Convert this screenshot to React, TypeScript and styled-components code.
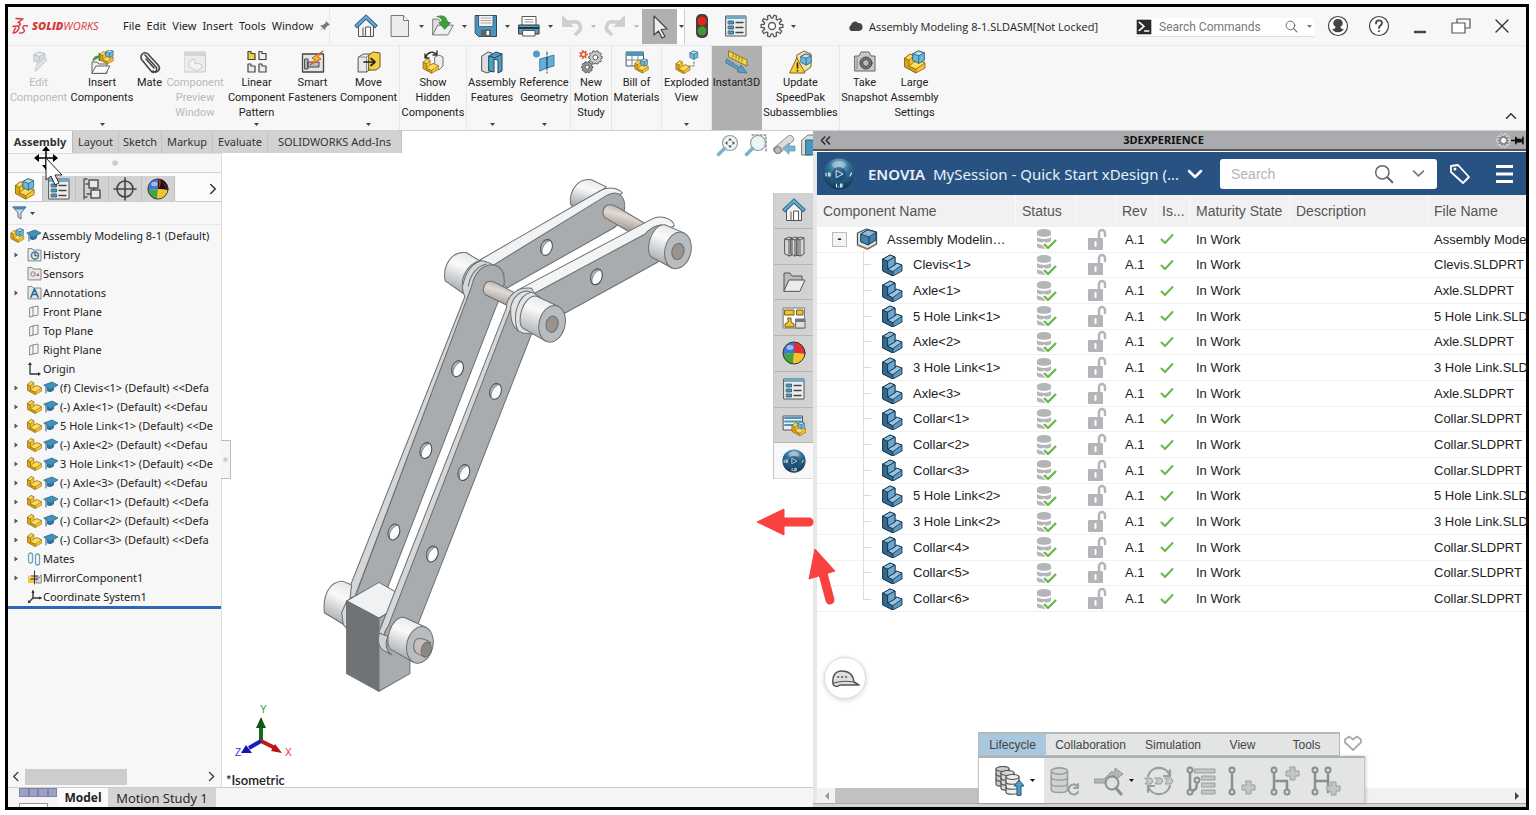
import React from "react";
import styled, { createGlobalStyle, css } from "styled-components";

const UI = `"Noto Sans", "Open Sans", sans-serif`;
const ARIAL = `"Liberation Sans", Arial, sans-serif`;

const Global = createGlobalStyle`
  *, *::before, *::after { box-sizing: border-box; }
  body { margin: 0; background: #fff; font-family: ${UI}; font-size: 12px; color: #222; }
  button { font: inherit; color: inherit; background: none; border: 0; padding: 0; margin: 0; cursor: default; }
  input { font: inherit; border: 0; outline: 0; background: none; padding: 0; }
  svg { display: block; flex: none; }
  a { color: inherit; text-decoration: none; }
`;

/* ---------- shell ---------- */
const Page = styled.div`
  display: flex;
  min-height: 100vh;
  padding: 4px 7px 5px 5px;
`;
const Frame = styled.div`
  position: relative;
  flex: 1;
  min-width: 0;
  display: flex;
  flex-direction: column;
  border: 3px solid #000;
  background: #f7f7f7;
`;

/* ---------- title bar ---------- */
const TitleBar = styled.header`
  display: flex;
  align-items: stretch;
  height: 39px;
  border-bottom: 1px solid #e9e9e9;
`;
const Brand = styled.div`
  display: flex;
  align-items: center;
  width: 322px;
  padding-left: 4px;
  border-right: 1px solid #e9e9e9;
`;
const BrandName = styled.span`
  flex: none;
  width: 91px;
  margin-left: 4px;
  font: italic 400 11px/14px "Open Sans", sans-serif;
  color: #d9363c;
  b { font-weight: 800; }
`;
const MenuBar = styled.nav`
  display: flex;
  align-items: center;
  gap: 6px;
`;
const MenuLink = styled.a`
  font-size: 11px;
  line-height: 16px;
  white-space: nowrap;
`;
const QuickTools = styled.div`
  display: flex;
  align-items: stretch;
  padding-left: 20px;
`;
const QuickGroup = styled.div<{ $dim?: boolean; $w?: number }>`
  display: flex;
  align-items: center;
  width: ${(p) => p.$w ?? 43}px;
  padding-left: 4px;
  gap: 5px;
  opacity: ${(p) => (p.$dim ? 0.35 : 1)};
`;
const SelectButton = styled.button`
  display: grid;
  place-items: center;
  width: 35px;
  margin: 2px 0 1px;
  background: #b0b0b0;
`;
const SelectMore = styled.button`
  display: grid;
  place-items: center;
  width: 8px;
  margin: 2px 0 1px;
  background: #fff;
  border-right: 1px solid #ccc;
`;
const DocumentName = styled.div`
  flex: 1;
  display: flex;
  align-items: center;
  justify-content: flex-end;
  gap: 6px;
  white-space: nowrap;
  font-family: "Open Sans", sans-serif;
  font-size: 11px;
`;
const CommandSearch = styled.label`
  display: flex;
  align-items: center;
  align-self: center;
  gap: 7px;
  width: 178px;
  height: 19px;
  margin: 2px 12px 0 38px;
  background: #fff;
  border-bottom: 1px solid #ddd;
  font-family: Roboto, sans-serif;
  font-size: 12px;
  color: #777;
  input { flex: 1; min-width: 0; &::placeholder { color: #777; opacity: 1; } }
`;
const WindowButtons = styled.div`
  display: flex;
  align-items: center;
  gap: 17px;
  padding-right: 12px;
`;

/* ---------- ribbon ---------- */
const Ribbon = styled.div`
  display: flex;
  align-items: stretch;
  height: 85px;
  border-bottom: 1px solid #d0d0d0;
`;
const RibbonButton = styled.button<{ $w: number; $dim?: boolean; $on?: boolean; $sep?: boolean }>`
  display: flex;
  flex-direction: column;
  align-items: center;
  width: ${(p) => p.$w}px;
  padding: 4px 0 3px;
  border-right: 1px solid ${(p) => (p.$sep ? "#e6e6e6" : "transparent")};
  font-family: Roboto, sans-serif;
  font-size: 11px;
  line-height: 15px;
  text-align: center;
  white-space: pre;
  ${(p) => p.$on && css`background: #b0b0b0;`}
  ${(p) => p.$dim && css`color: #b9b9b9; svg { opacity: 0.35; }`}
`;
const RibbonText = styled.span`
  flex: 1;
  margin-top: 1px;
`;
const Collapse = styled.button`
  margin-left: auto;
  align-self: flex-end;
  padding: 0 9px 8px;
`;

/* ---------- body ---------- */
const Body = styled.div`
  flex: 1;
  display: flex;
  min-height: 0;
`;
const Workspace = styled.section`
  flex: 1;
  min-width: 0;
  display: flex;
  flex-direction: column;
  background: #fff;
`;
const TabRow = styled.div`
  display: flex;
  height: 22px;
`;
const CommandTab = styled.button<{ $on?: boolean; $w: number }>`
  width: ${(p) => p.$w}px;
  background: ${(p) => (p.$on ? "#f9f9f9" : "#d2d2d2")};
  border-right: 1px solid ${(p) => (p.$on ? "#bbb" : "#c2c2c2")};
  font-size: 11px;
  line-height: 20px;
  white-space: nowrap;
  color: #333;
  font-weight: ${(p) => (p.$on ? 700 : 400)};
`;
const ViewTools = styled.div`
  flex: 1;
  display: flex;
  justify-content: flex-end;
  align-items: flex-start;
  gap: 4px;
  padding-top: 2px;
  overflow: visible;
`;
const Split = styled.div`
  flex: 1;
  display: flex;
  min-height: 0;
`;
const Manager = styled.aside`
  position: relative;
  display: flex;
  flex-direction: column;
  width: 214px;
  background: #f7f7f7;
  border-right: 1px solid #dcdcdc;
`;
const Grip = styled.div`
  display: grid;
  place-items: center;
  height: 20px;
  border-top: 1px solid #ddd;
  border-bottom: 1px solid #d4d4d4;
`;
const ManagerTabs = styled.div`
  display: flex;
  height: 29px;
  padding-top: 3px;
  border-bottom: 1px solid #ccc;
  background: #fbfbfb;
`;
const ManagerTab = styled.button<{ $on?: boolean }>`
  display: grid;
  place-items: center;
  width: ${(p) => (p.$on ? 35 : 33)}px;
  background: ${(p) => (p.$on ? "#fbfbfb" : "#d2d2d2")};
  border-right: 1px solid #c0c0c0;
`;
const MoreTabs = styled.button`
  margin-left: auto;
  padding-right: 2px;
`;
const FilterRow = styled.div`
  display: flex;
  align-items: center;
  height: 23px;
  padding-left: 4px;
  border-bottom: 1px solid #e8e8e8;
`;
const Tree = styled.ul`
  list-style: none;
  margin: 0;
  padding: 1px 0 0;
  border-bottom: 3px solid #2f66b5;
`;
const TreeItem = styled.li<{ $root?: boolean }>`
  display: flex;
  align-items: center;
  height: 19px;
  padding-left: ${(p) => (p.$root ? 2 : 5)}px;
  white-space: nowrap;
  font-size: 11px;
  line-height: 18px;
`;
const Arrow = styled.span`
  flex: none;
  width: 14px;
`;
const Pad = styled.span`
  width: 1px;
  flex: none;
`;
const Nub = styled.button`
  position: absolute;
  left: 213px;
  top: 287px;
  width: 10px;
  height: 39px;
  display: grid;
  place-items: center;
  background: #f5f5f5;
  border: 1px solid #bbb;
  border-left: 0;
`;
const TreeScroll = styled.div`
  display: flex;
  align-items: center;
  justify-content: space-between;
  height: 19px;
  margin-top: auto;
  padding: 0 4px 2px 3px;
`;
const TreeThumb = styled.div`
  width: 102px;
  height: 16px;
  margin: 0 auto 0 3px;
  background: #cdcdcd;
`;
const Viewport = styled.main`
  flex: 1;
  display: flex;
  min-width: 0;
  position: relative;
`;
const ModelCanvas = styled.svg`
  flex: 1;
  min-width: 0;
  height: 634px;
`;
const ViewName = styled.span`
  position: absolute;
  left: 4px;
  bottom: -2px;
  font: 600 13px/18px Lato, sans-serif;
  color: #222;
`;
const TaskTabs = styled.div`
  display: flex;
  flex-direction: column;
  width: 40px;
  height: 286px;
  margin-top: 40px;
  border-left: 1px solid #c6c6c6;
`;
const TaskTab = styled.button<{ $on?: boolean }>`
  flex: 1;
  display: grid;
  place-items: center;
  background: ${(p) => (p.$on ? "#f8f8f8" : "#d2d2d2")};
  border-bottom: 1px solid ${(p) => (p.$on ? "#ddd" : "#b5b5b5")};
`;
const BottomBar = styled.div`
  display: flex;
  height: 20px;
  background: #f5f5f5;
  border-top: 1px solid #ccc;
`;
const SheetNav = styled.div`
  width: 50px;
  padding: 0 0 0 11px;
  display: flex;
  flex-direction: column;
  gap: 6px;
`;
const NavCells = styled.div`
  display: grid;
  grid-template-columns: repeat(4, 1fr);
  width: 38px;
  height: 9px;
  background: #9da1c4;
  span { border: 1px solid #7e83ab; }
`;
const NavBox = styled.div`
  width: 29px;
  height: 4px;
  border: 1px solid #999;
  border-bottom: 0;
  background: #fff;
`;
const SheetTab = styled.button<{ $on?: boolean; $w: number }>`
  width: ${(p) => p.$w}px;
  background: ${(p) => (p.$on ? "#fafafa" : "#d4d4d4")};
  font-family: "Open Sans", sans-serif;
  font-size: ${(p) => (p.$on ? 12 : 13)}px;
  line-height: 16px;
  font-weight: ${(p) => (p.$on ? 700 : 400)};
  white-space: nowrap;
`;

/* ---------- 3DEXPERIENCE pane ---------- */
const Pane = styled.section`
  display: flex;
  flex-direction: column;
  width: 713px;
  background: #fff;
  position: relative;
`;
const PaneHead = styled.div`
  display: flex;
  align-items: center;
  justify-content: space-between;
  height: 20px;
  padding: 0 2px 0 7px;
  background: #a9abae;
  border-bottom: 2px solid #555;
  h2 { margin: 0; font: 700 11px/18px ${UI}; color: #111; }
`;
const PaneTools = styled.div`
  display: flex;
  align-items: center;
`;
const PaneBody = styled.div`
  flex: 1;
  display: flex;
  flex-direction: column;
  margin-top: 1px;
  border-left: 4px solid #e7e7e9;
`;
const SessionBar = styled.div`
  display: flex;
  align-items: center;
  height: 43px;
  padding: 0 12px 0 6px;
  background: #275282;
  color: #e9f0f8;
`;
const SessionTitle = styled.h1`
  flex: 1;
  display: flex;
  align-items: center;
  gap: 8px;
  margin: 0 0 0 13px;
  font: 400 15px/20px "Noto Sans", sans-serif;
  white-space: nowrap;
  b { font-weight: 600; }
`;
const SessionSearch = styled.label`
  display: flex;
  align-items: center;
  gap: 18px;
  width: 217px;
  height: 30px;
  margin-right: 11px;
  padding: 0 12px 0 11px;
  background: #fff;
  border-radius: 3px;
  font-family: ${ARIAL};
  font-size: 14px;
  input { flex: 1; min-width: 0; &::placeholder { color: #b4b4b4; opacity: 1; } }
`;
const Grid = styled.table`
  width: 100%;
  height: 417px;
  table-layout: fixed;
  border-collapse: separate;
  border-spacing: 0;
  font-family: ${ARIAL};
  font-size: 13px;
  color: #222;
`;
const Th = styled.th<{ $w?: number }>`
  width: ${(p) => (p.$w ? `${p.$w}px` : "auto")};
  height: 32px;
  padding: 0 0 0 6px;
  text-align: left;
  font-size: 14px;
  font-weight: 400;
  color: #555;
  background: #f1f1f1;
  border-right: 1px solid #fafafa;
  white-space: nowrap;
`;
const Td = styled.td<{ $pad?: number }>`
  padding: 0 0 0 ${(p) => p.$pad ?? 6}px;
  border-bottom: 1px solid #f1f1f1;
  white-space: nowrap;
`;
const NameCell = styled.div<{ $child?: boolean }>`
  display: flex;
  align-items: center;
  gap: ${(p) => (p.$child ? 10 : 9)}px;
  padding-left: ${(p) => (p.$child ? 46 : 15)}px;
  height: 24px;
`;
const Guide = styled.span<{ $last?: boolean }>`
  align-self: stretch;
  width: 8px;
  margin: ${(p) => (p.$last ? "-2px 0 11px" : "-2px 0")};
  border-left: 1px solid #dcdcdc;
  border-bottom: ${(p) => (p.$last ? "1px solid #dcdcdc" : "0")};
  background: ${(p) => (p.$last ? "none" : "linear-gradient(#dcdcdc, #dcdcdc) 0 50% / 8px 1px no-repeat")};
`;
const Toggle = styled.button`
  width: 15px;
  height: 15px;
  border: 1px solid #bbb;
  background: #f4f4f4;
  font: 700 12px/11px ${ARIAL};
`;
const PaneScroll = styled.div`
  display: flex;
  align-items: center;
  height: 15px;
  margin-top: auto;
  padding: 0 5px 0 6px;
  background: #f1f1f1;
  justify-content: space-between;
`;
const PaneThumb = styled.div`
  width: 340px;
  height: 15px;
  margin: 0 auto 0 4px;
  background: #c1c1c1;
`;
const PaneFoot = styled.div`
  height: 4px;
  background: #d5d5d5;
  border-top: 1px solid #aaa;
`;
const Helmet = styled.button`
  position: absolute;
  left: 11px;
  bottom: 108px;
  width: 42px;
  height: 42px;
  display: grid;
  place-items: center;
  border-radius: 50%;
  border: 1px solid #ddd;
  background: #fff;
  box-shadow: 0 1px 5px rgba(0, 0, 0, 0.18);
`;
const Actions = styled.div`
  position: absolute;
  left: 165px;
  bottom: 4px;
  width: 387px;
`;
const ActionTabsRow = styled.div`
  display: flex;
  align-items: center;
  gap: 3px;
`;
const ActionTabs = styled.div`
  display: flex;
  height: 24px;
  width: 362px;
  border: 1px solid #b5b8b8;
  border-top-width: 2px;
  background: #e2e5e4;
`;
const ActionTab = styled.button<{ $w: number; $on?: boolean }>`
  width: ${(p) => p.$w}px;
  font: 12px/20px ${ARIAL};
  color: #444;
  background: ${(p) => (p.$on ? "#a7c8de" : "none")};
`;
const ActionBar = styled.div`
  display: flex;
  height: 47px;
  border: 1px solid #c3c6c6;
  border-top: 2px solid #aeb1b1;
  border-bottom: 0;
  background: #e2e5e4;
  box-shadow: 1px 0 3px rgba(0, 0, 0, 0.2);
`;
const Action = styled.button<{ $w: number; $on?: boolean; $more?: boolean }>`
  display: flex;
  align-items: center;
  justify-content: center;
  gap: 3px;
  width: ${(p) => p.$w}px;
  padding-left: ${(p) => (p.$more ? 8 : 0)}px;
  background: ${(p) => (p.$on ? "#fff" : "none")};
`;
const Overlay = styled.svg<{ $x: number; $y: number }>`
  position: absolute;
  left: ${(p) => p.$x}px;
  top: ${(p) => p.$y}px;
  pointer-events: none;
`;

/* ---------- icons ---------- */
type IconProps = { s?: number; children?: React.ReactNode; vb?: string; w?: number };
const I = ({ s = 24, w, vb = "0 0 24 24", children }: IconProps) => (
  <svg width={w ?? s} height={s} viewBox={vb} fill="none" strokeLinejoin="round" strokeLinecap="round" aria-hidden="true">
    {children}
  </svg>
);
const Caret = ({ color = "#444" }: { color?: string }) => (
  <svg width="9" height="5" viewBox="0 0 9 5" aria-hidden="true"><path d="M2 1h5L4.500 4z" fill={color} /></svg>
);
const Block = ({ x = 0, y = 0, k = 1 }: { x?: number; y?: number; k?: number }) => (
  <g transform={`translate(${x} ${y}) scale(${k})`} stroke="#8a6210" strokeWidth=".8">
    <path d="M2 8l5-4 4 2v6l4-2 7 3v5l-9 5-11-6z" fill="#f5c52c" />
    <path d="M2 8l4 2v6l7 3.500V23L2 17z" fill="#dba41a" />
    <path d="M2 8l5-4 4 2-5 4zM6 16l5-4 4-2 7 3-9 6z" fill="#fbdc5e" />
  </g>
);
const Cube = ({ x = 0, y = 0, k = 1, c = "#6db7dd" }: { x?: number; y?: number; k?: number; c?: string }) => (
  <g transform={`translate(${x} ${y}) scale(${k})`} stroke="#1d4f6e" strokeWidth=".8">
    <path d="M0 3l6-3 6 2v8l-6 3-6-3z" fill={c} />
    <path d="M0 3l6 2 6-3-6-2z" fill="#b9e0f2" />
    <path d="M6 5v8" />
  </g>
);
const AsmIcon = ({ s = 24 }: { s?: number }) => <I s={s}><Block /><Cube x={10} y={1} k={0.95} /></I>;
const House = ({ s = 24 }: { s?: number }) => (
  <I s={s}>
    <path d="M4.500 12v10.500h15V12L12 5z" fill="#f2f2f2" stroke="#555" />
    <path d="M1.500 13L12 3l10.500 10" stroke="#275b7a" strokeWidth="4" strokeLinecap="butt" strokeLinejoin="miter" />
    <path d="M2 12.500L12 3l10 9.500" stroke="#5fadd3" strokeWidth="2.400" strokeLinecap="butt" strokeLinejoin="miter" />
    <path d="M12 13h4.500v9.500H12zM9 14v8.500" fill="#fff" stroke="#555" />
  </I>
);
const Doc = () => (
  <I><path d="M3.500 1.500h12l5 5v16h-17z" fill="#ececec" stroke="#777" /><path d="M15.500 1.500v5h5" fill="#fff" stroke="#777" /></I>
);
const OpenIcon = () => (
  <I vb="0 0 28 24">
    <path d="M2 22V4h7l2 3h9v5" fill="#ddd" stroke="#666" />
    <path d="M2 22l6-11h18l-6 11z" fill="#efefef" stroke="#666" />
    <path d="M7 1c8-3 12 1 12 7h4l-7 8-7-8h4c0-4-2-6-6-7z" fill="#3f9e34" stroke="#24701c" strokeWidth=".6" />
  </I>
);
const Save = () => (
  <I>
    <path d="M1.500 1.500h21v21h-18l-3-3z" fill="#4a95bf" stroke="#2a4a5c" />
    <path d="M5 1.500h14v11H5z" fill="#f3f3f3" stroke="#2a4a5c" strokeWidth=".7" /><path d="M7 4h10M7 6.500h10M7 9h10" stroke="#aaa" />
    <path d="M7 15.500h10v7H7z" fill="#5d6468" /><path d="M12.500 17h2.500v4h-2.500z" fill="#fff" />
  </I>
);
const Print = () => (
  <I>
    <path d="M5 11V2.500h14V11" fill="#fff" stroke="#555" />
    <path d="M8 5.500h8M8 8h8" stroke="#999" />
    <path d="M2 11h20v9H2z" fill="#5aa3c8" stroke="#333" /><path d="M2.500 14h19" stroke="#234" strokeWidth="2" />
    <path d="M6 16.500h12V22H6z" fill="#fff" stroke="#555" />
  </I>
);
const Undo = ({ flip }: { flip?: boolean }) => (
  <I><g transform={flip ? "translate(24 0) scale(-1 1)" : undefined}>
    <path d="M6 8h8a5.500 5.500 0 0 1 4 10l-3 3" stroke="#888" strokeWidth="3.500" strokeLinecap="butt" /><path d="M2 1v12h12z" fill="#888" />
  </g></I>
);
const Pointer = () => <I><path d="M6 1l13 13-6 .5 4 7-3 1.500-3.500-7L6 20z" fill="#eee" stroke="#444" strokeWidth="1.200" /></I>;
const Traffic = () => (
  <I s={26} vb="0 0 24 26"><rect x="6" y="1" width="12" height="24" rx="5" fill="#4a3c3c" />
    <circle cx="12" cy="8" r="4.500" fill="#e1251b" /><circle cx="12" cy="18" r="4.500" fill="#3f9a35" /></I>
);
const ListIcon = ({ s = 24 }: { s?: number }) => (
  <I s={s}><path d="M2 2h20v20H2z" fill="#eceded" stroke="#555" /><path d="M2 2h20v3H2z" fill="#6fa9c6" />
    {[7, 12, 17].map((y) => <g key={y}><path d={`M4.500 ${y}h5v3h-5z`} fill="#4a9cc7" stroke="#245" strokeWidth=".7" /><path d={`M12 ${y + 1.5}h7`} stroke="#444" strokeWidth="1.300" /></g>)}</I>
);
const gearPath = (c: number, r: number, n: number, d: number) => {
  let p = "";
  for (let i = 0; i < n; i++) {
    const a = (i * 2 * Math.PI) / n, h = Math.PI / n;
    [[-0.7, r - d], [-0.4, r], [0.4, r], [0.7, r - d]].forEach(([k, R], j) => {
      p += `${i || j ? "L" : "M"}${(c + R * Math.cos(a + k * h)).toFixed(2)} ${(c + R * Math.sin(a + k * h)).toFixed(2)}`;
    });
  }
  return p + "z";
};
const Gear = ({ s = 24, stroke = "#555", fill = "#f4f4f4" }: { s?: number; stroke?: string; fill?: string }) => (
  <I s={s}><path d={gearPath(12, 11, 10, 3)} fill={fill} stroke={stroke} strokeWidth="1.300" /><circle cx="12" cy="12" r="3.500" fill="#fff" stroke={stroke} strokeWidth="1.300" /></I>
);
const Ball = ({ s = 24, dark }: { s?: number; dark?: boolean }) => (
  <I s={s}>
    <path d="M12 12V1A11 11 0 0 0 1 13z" fill="#3b78dd" /><path d="M12 12V1a11 11 0 0 1 11 12z" fill={dark ? "#1b1114" : "#dc2f36"} />
    <path d="M12 12L1 13a11 11 0 0 0 10 10z" fill="#45a43c" /><path d="M12 12l11 1a11 11 0 0 1-12 10z" fill="#f3c52b" />
    {dark && <path d="M12 2c2 3 1 7 0 10 3-3 4-8 2-10zM17 4c2 2 4 5 4 8z" fill="#c72c25" />}
    <circle cx="12" cy="12" r="11" stroke="#333" /><ellipse cx="8" cy="6.500" rx="3.500" ry="2.500" fill="#fff" opacity=".5" />
  </I>
);
const Compass = ({ s = 32 }: { s?: number }) => (
  <I s={s} vb="0 0 32 32">
    <defs><radialGradient id="cmp" cx=".5" cy=".2" r=".9"><stop offset="0" stopColor="#8bb8d3" /><stop offset=".4" stopColor="#2f6b93" /><stop offset="1" stopColor="#0c2c47" /></radialGradient></defs>
    <circle cx="16" cy="16" r="15.500" fill="url(#cmp)" /><ellipse cx="16" cy="7" rx="7" ry="4" fill="#cfe3ef" opacity=".45" />
    <circle cx="16" cy="16" r="7" fill="#174468" opacity=".6" /><path d="M13.500 12.500l6.500 3.500-6.500 3.500z" stroke="#cfe3f2" />
    <path d="M3 15v3M5.500 15v3h1.500v-3zM27 18l1.500-3M13.500 26v3M15.500 29h.2M17.500 26h1.500v3h-1.500z" stroke="#d7e8f3" strokeWidth="1.200" />
  </I>
);
const Clip = () => <I><path d="M7 5l11 12a3 3 0 0 1-5 4L4 10C1 6 6 0 10 4l10 11c4 5-2 9-5 6M8 9l8 9" stroke="#444" strokeWidth="1.600" /></I>;
const Insert = () => (
  <I><path d="M2 23V12h5l2 2h8v9z" fill="#eee" stroke="#666" /><path d="M2 23l4-7h14l-4 7z" fill="#fafafa" stroke="#666" /><path d="M3 11c0-4 3-5 6-5V3l4 4-4 4V8" fill="#4aa33c" stroke="#2d7a25" strokeWidth=".7" /><Block x={9} y={-1} k={0.65} /><Cube x={16} y={0} k={0.6} /></I>
);
const EditPart = () => <I><Cube x={7} y={2} k={0.9} c="#aaa" /><path d="M8 21l2-7L18 8l2 2-9 9z" fill="#bbb" stroke="#777" /></I>;
const PreviewWin = () => <I><path d="M1.500 2h21v20h-21z" fill="#ddd" stroke="#777" /><path d="M1.500 2h21v4h-21z" fill="#999" /><path d="M6 12l4-3 2 1v4l3-1 4 2v3l-5 3-8-4z" fill="#eee" stroke="#777" /></I>;
const Pattern = () => (
  <I>{[[3, 1.5, "#f6d23c"], [14, 1.5, "#eee"], [3, 14, "#eee"], [14, 14, "#eee"]].map(([x, y, c], i) => (
    <path key={i} transform={`translate(${x} ${y})`} d="M0 0h3v2h4v6H0z" fill={c as string} stroke="#444" strokeWidth="1.200" />))}</I>
);
const Smart = () => <I><path d="M1.500 4h21v18h-21z" fill="#e4e4e4" stroke="#444" strokeWidth="1.300" /><path d="M4 9h3v10H4zM7 12h11v5H7z" fill="#bbb" stroke="#444" /><path d="M22 1L11 8l3 2-5 5 11-6-3-2z" fill="#f6b62c" stroke="#b5471b" strokeWidth=".8" /></I>;
const Move = () => <I><path d="M1.500 7l5-3h7v15l-4 3h-8z" fill="#e9e9e9" stroke="#555" /><path d="M1.500 7h8v15M9.500 7l4-3" stroke="#777" strokeWidth=".8" /><path d="M12 5l4-3 7 1v14l-4 3h-7z" fill="#f3cf45" stroke="#6d5913" /><path d="M7 12h10M14 8.500l4 3.500-4 3.500" stroke="#222" strokeWidth="1.700" /></I>;
const ShowHidden = () => <I><path d="M14 7l4-2 4 2v9l-4 4-4-3z" fill="#eee" stroke="#777" /><Block x={1} y={6} k={0.75} /><path d="M5 7c1-5 7-6 10-3M4 4v4h4M16 1v4h-4" stroke="#333" strokeWidth="1.400" /></I>;
const AsmFeat = () => <I><path d="M2 6l6-4 4 1v18l-5 2-5-2z" fill="#ddd" stroke="#555" /><path d="M9 6l7-4 6 2v17l-4 2V10l-4-1v13l-5-1z" fill="#4f9dc5" stroke="#245" /><path d="M9 6l6 2 7-4" stroke="#245" /></I>;
const RefGeo = () => <I><circle cx="4.500" cy="4" r="3.500" fill="#4d9cc6" /><path d="M8 9l7-2v11l-7 3zM15 7l7-2v11l-7 2z" fill="#62aed6" stroke="#2d6c8e" strokeWidth=".8" /><path d="M15 2v21" stroke="#245" strokeDasharray="3 2" /></I>;
const Motion = () => <I><path d={gearPath(4.5, 4.5, 7, 1.5)} fill="#d95f2c" /><circle cx="4.500" cy="4.500" r="1.400" fill="#fff" /><g transform="translate(9 0) scale(.62)"><path d={gearPath(12, 11, 10, 2)} fill="#ccc" stroke="#555" strokeWidth="1.500" /><circle cx="12" cy="12" r="4" fill="#fff" stroke="#555" strokeWidth="1.500" /></g><g transform="translate(2 11) scale(.52)"><path d={gearPath(12, 11, 10, 2)} fill="#999" stroke="#444" strokeWidth="1.500" /><circle cx="12" cy="12" r="4" fill="#fff" stroke="#444" strokeWidth="1.500" /></g></I>;
const Bom = () => <I><path d="M1.500 2h17v14h-17z" fill="#fff" stroke="#456" /><path d="M1.500 2h17v4h-17z" fill="#4c97bf" /><path d="M1.500 10h17M7 6v10M13 6v10" stroke="#789" /><Block x={9} y={8} k={0.65} /><Cube x={16} y={9} k={0.55} /></I>;
const Explode = () => <I><Block x={0} y={8} k={0.68} /><Cube x={15} y={1} k={0.65} /><path d="M14 16h5v-5" stroke="#777" strokeDasharray="2 1.500" /></I>;
const Instant = () => <I><path d="M4 1l18 9v6L4 7z" fill="#f5da4a" stroke="#7a6510" strokeWidth=".8" /><path d="M8 4v3M11 5.500v3M14 7v3M17 8.500v3" stroke="#7a6510" strokeWidth=".8" /><path d="M2 9l13 9 1-3 6 8-10-1 1.500-2L1 13z" fill="#5c9fc4" stroke="#35677f" strokeWidth=".7" /></I>;
const SpeedPak = () => <I><path d="M8 5l7-4 7 3v13l-7 5-7-3z" fill="#ece3b5" stroke="#7b6a2a" /><Cube x={12} y={4} k={0.85} /><path d="M8 8l8 15H1z" fill="#f8cf3a" stroke="#8a6a10" /><path d="M8.500 13v5M8.500 20.500v.3" stroke="#333" strokeWidth="1.700" /></I>;
const Camera = () => <I><path d="M2 6h4l2-4h8l2 4h4v15H2z" fill="#c9c9c9" stroke="#666" /><circle cx="13" cy="13" r="6" fill="#777" stroke="#444" /><circle cx="13" cy="13" r="3.500" fill="#bbb" stroke="#444" /><path d="M4 8v11" stroke="#888" /></I>;
const Cap = () => <I s={15} vb="0 0 15 15"><path d="M1 5l8-3 6 3-7 4z" fill="#3f93bd" stroke="#235f7d" strokeWidth=".7" /><path d="M4 7v4c2 2 5 1 7-1V7L8 9z" fill="#2d7299" /><path d="M3 6v7" stroke="#235f7d" /></I>;
const Folder = ({ kind }: { kind: string }) => (
  <I s={15} vb="0 0 15 15"><path d="M1 13.500v-12h4l1 1.500h8v10.500z" fill="#e6e6e6" stroke="#888" />
    {kind === "A" && <path d="M4 12l3.500-8 3.500 8M5.500 9.500h4" stroke="#256d98" strokeWidth="1.700" />}
    {kind === "H" && <><circle cx="8" cy="8.500" r="3.500" stroke="#3a7595" strokeWidth="1.300" /><path d="M8 6.500v2.300h2" stroke="#333" /></>}
    {kind === "S" && <><circle cx="6" cy="8" r="2.200" stroke="#888" /><path d="M9 10l2-3 1.500 3z" fill="#c55" /></>}
  </I>
);
const PlaneIcon = () => <I s={15} vb="0 0 15 15"><path d="M3 4l3-1v9l-3 1zM6 3l5-1v9l-5 1" stroke="#888" /></I>;
const OriginIcon = () => <I s={15} vb="0 0 15 15"><path d="M3 13V3M3 13h9" stroke="#333" strokeWidth="1.300" /><path d="M1 4l2-3 2 3zM11 11l3 2-3 2z" fill="#333" /></I>;
const MatesIcon = () => <I s={15} vb="0 0 15 15"><path d="M5.500 4v6a2 2 0 0 1-4 0V4a2 2 0 0 1 4 0v5M12.500 6v6a2 2 0 0 1-4 0V5a2 2 0 0 1 4 0" stroke="#6da3bd" strokeWidth="1.300" /></I>;
const MirrorIcon = () => <I s={15} vb="0 0 15 15"><path d="M1 5l3 3 3-2v7H1z" fill="#f0c83a" /><path d="M14 5l-2 3-3-2v7h5z" fill="#ddd" stroke="#888" /><path d="M7.500 1v13M4 6h7M4 9h7" stroke="#333" /></I>;
const CoordIcon = () => <I s={15} vb="0 0 15 15"><path d="M6 9V2M6 9h8M6 9l-4 4" stroke="#333" strokeWidth="1.400" /><path d="M4.500 4L6 1l1.500 3zM12 7.500L15 9l-3 1.500zM1 11v3h3z" fill="#333" /></I>;
const Config = () => <I><path d="M4 2v20M4 2h3M4 20h3" stroke="#555" strokeWidth="1.300" /><path d="M9 3h9v8H9zM11 13h9v8h-9z" fill="#e8e8e8" stroke="#555" strokeWidth="1.500" /><path d="M14 11v2M6 7h3M7 17h4" stroke="#555" strokeWidth="1.500" /></I>;
const Target = () => <I><circle cx="12" cy="12" r="8" stroke="#444" strokeWidth="1.600" /><path d="M12 1v22M1 12h22" stroke="#444" strokeWidth="1.600" /></I>;
const Funnel = () => <I s={16} vb="0 0 16 16"><path d="M1 2h13L9 8v6l-3-2V8z" fill="#c9dbe4" stroke="#557" strokeWidth=".9" /><path d="M1 1.500h13l-2 3H3z" fill="#3f8db5" /></I>;
const Chevron = ({ d = "M5 2l6 6-6 6", s = 14, c = "#333", sw = 2 }: { d?: string; s?: number; c?: string; sw?: number }) => <I s={s} vb="0 0 16 16"><path d={d} stroke={c} strokeWidth={sw} /></I>;
const ZoomFit = ({ area }: { area?: boolean }) => (
  <I>{area && <path d="M8 2h14v16" stroke="#555" strokeDasharray="2 2" />}<circle cx="14" cy="10" r="7.500" fill="#edf4f8" stroke="#999" strokeWidth="1.200" />
    {!area && <path d="M14 5l2 2.500h-4zM14 15l2-2.500h-4zM9 10l2.500-2v4zM19 10l-2.500-2v4z" fill="#555" />}
    <path d="M8.500 15.500l-6 6" stroke="#7fb2cd" strokeWidth="3.500" /></I>
);
const PrevView = () => <I><path d="M2 15L16 3c4-2 7 2 5 5L8 20c-4 2-8-2-6-5z" fill="#ddd" stroke="#888" /><circle cx="6" cy="17" r="3.500" fill="#bbb" stroke="#777" /><path d="M11 15l6-5v3h6v5h-6v3z" fill="#7db4d2" stroke="#5590b0" strokeWidth=".7" /></I>;
const SectionView = () => <I w={13} vb="0 0 13 24"><path d="M2 7l6-5h8v15l-6 5H2z" fill="#ddd" stroke="#777" /><path d="M6 7h8v15H6z" fill="#4a96bf" stroke="#2c6585" /></I>;
const Library = () => <I><path d="M3 5l4-2 3 1v17l-3 1-4-2zM9 5l4-2 3 1v17l-3 1-4-2zM15 5l3-2 4 1v16l-4 2-3-1z" fill="#d8d8d8" stroke="#555" /><path d="M3 5l4 1 3-2M7 6v16M13 6v16M18 6v16M9 5l4 1 3-2M15 5l3 1 4-2" stroke="#555" /></I>;
const FolderOpen = () => <I><path d="M2 21V3h6l2 3h10v4" fill="#bbb" stroke="#555" /><path d="M2 21l5-11h16l-5 11z" fill="#ececec" stroke="#555" /></I>;
const Palette = () => <I><path d="M1.500 2h21v20h-21z" fill="#fff" stroke="#777" /><path d="M3 4h9v5H3zM15 4h6v5h-6zM6 12h3v4l3 2v3H3v-3l3-2z" fill="#f1c232" stroke="#6d5913" /><path d="M14 13h9v9h-9z" fill="#ddd" stroke="#666" /><path d="M14 13h9v3h-9z" fill="#777" /></I>;
const Props = () => <I><path d="M1.500 3h19v14h-19z" fill="#eee" stroke="#555" /><path d="M3 5h16M3 8.500h16M3 12h10" stroke="#4b96be" strokeWidth="2" /><Block x={9} y={7} k={0.68} /><Cube x={16} y={9} k={0.55} /></I>;
const BluePart = () => (
  <I s={22} vb="0 0 22 22"><g stroke="#173950" strokeWidth=".9">
    <path d="M2 5l7-4 5 2v7l1-1 6 2v6l-9 5-10-5z" fill="#5e97c2" />
    <path d="M2 5l5 2v8l5 2.500V22L2 17z" fill="#36698f" />
    <path d="M2 5l7-4 5 2-7 4z" fill="#8dbcdc" />
    <path d="M7 7l7-4v8l-7 4z" fill="#6fa6cd" />
    <path d="M7 15l7-4 1-2 6 2-9 6.500z" fill="#9ac5e2" /></g></I>
);
const BlueAsm = () => (
  <I s={22} vb="0 0 22 22"><path d="M1.500 5l9-4 10 3v12l-9 5-10-4z" fill="#e3e5e7" stroke="#4a4f55" strokeWidth="1.300" /><path d="M1.500 17l10 4 9-5" stroke="#8d7b6d" strokeWidth="1.500" /><path d="M5 6l7-4 8 2v8l-8 5-7-3z" fill="#4681ac" stroke="#193a52" /><path d="M5 6l8 3 7-5-8-2z" fill="#8ab8d8" stroke="#193a52" strokeWidth=".8" /><path d="M13 9v7" stroke="#193a52" /></I>
);
const dbShape = (c: string) => (
  <><path d="M0 3c0-4 14-4 14 0v2.500c0 3-14 3-14 0z" fill={c} /><path d="M0 8c2 2.500 12 2.500 14 0v3.500c0 3-14 3-14 0z" fill={c} /><path d="M0 14c2 2.500 12 2.500 14 0v3.500c0 3-14 3-14 0z" fill={c} /></>
);
const StatusIcon = () => <I s={22} vb="0 0 22 22">{<g transform="translate(1 1)">{dbShape("#b3b5b8")}</g>}<path d="M8 16l4 4 8-8" stroke="#fff" strokeWidth="4.500" /><path d="M8 16l4 4 8-8" stroke="#6ab74b" strokeWidth="2.400" strokeLinecap="butt" /></I>;
const Unlock = () => <I s={23} w={20} vb="0 0 20 23"><path d="M12 11V5a3 3 0 0 1 6 0v3" stroke="#b3b5b8" strokeWidth="2.500" /><rect x="1" y="10" width="15" height="12" rx="1" fill="#b3b5b8" /><path d="M8.500 14v4" stroke="#fff" strokeWidth="2" /></I>;
const Check = () => <I s={14} vb="0 0 14 14"><path d="M1.500 7.500l3.500 3.500 7.500-8" stroke="#6ab74b" strokeWidth="2" /></I>;

const DB = ({ x, y, f = "#ddd", st = "#555" }: { x: number; y: number; f?: string; st?: string }) => (
  <g transform={`translate(${x} ${y})`} stroke={st} strokeWidth="1.200" fill={f}><path d="M0 3v15c0 3 13 3 13 0V3" /><ellipse cx="6.500" cy="3" rx="6.500" ry="2.500" /><path d="M0 8c0 3 13 3 13 0M0 13c0 3 13 3 13 0" fill="none" /></g>
);
const G = "#9b9e9e";
const SaveStack = () => <I s={30} vb="0 0 30 30"><DB x={1} y={0} f="#ccc" /><DB x={6} y={4} f="#d8d8d8" /><DB x={11} y={8} f="#eee" /><path d="M22 29V20h-3l5-6 5 6h-3v9z" fill="#4f9cca" stroke="#22506e" /></I>;
const DbRefresh = () => <I s={30} vb="0 0 30 30"><g transform="scale(1.250)"><DB x={1} y={1} f="#d0d3d3" st={G} /></g><path d="M28 21a5 5 0 1 0 0 5M28 18v4h-4" stroke={G} strokeWidth="2" /></I>;
const Explore = () => <I s={30} vb="0 0 30 30"><path d="M1 13h9l7-7h4V2l8 6-8 6v-4h-3l-6 7H1z" fill="#b5b8b8" stroke="#888" strokeWidth=".8" /><circle cx="18" cy="17" r="6.500" fill="#dfe2e2" stroke="#8c8f8f" strokeWidth="2" /><path d="M22 22l5 6" stroke="#8c8f8f" strokeWidth="3" /></I>;
const Sync = () => <I s={30} vb="0 0 30 30"><path d="M4 10a11.500 11.500 0 0 1 22 0M26 20a11.500 11.500 0 0 1-22 0M26 4v6h-6M4 26v-6h6" stroke={G} strokeWidth="2.200" /><path d="M1 12h6l2 3-2 3H1l2-3zM11 12h6l2 3-2 3h-6l2-3zM21 12h6l2 3-2 3h-6l2-3z" fill="#c6c9c9" stroke={G} /></I>;
const Node = ({ x, y }: { x: number; y: number }) => <circle cx={x} cy={y} r="2.500" fill="#dfe2e2" stroke="#8c8f8f" strokeWidth="2" />;
const Plus = ({ x, y }: { x: number; y: number }) => <path transform={`translate(${x} ${y})`} d="M4 0h5v4h4v5H9v4H4V9H0V4h4z" fill="#c3c6c6" stroke={G} />;
const Struct = () => <I s={30} vb="0 0 30 30"><path d="M4 4v22M4 25c6 0 7-3 7-9" stroke="#8c8f8f" strokeWidth="2.500" /><Node x={4} y={4} /><Node x={4} y={26} /><Node x={11} y={14} />{[3, 10, 17, 24].map((y, i) => <rect key={y} x={i === 0 ? 9 : 16} y={y} width={i === 0 ? 20 : 13} height="4" fill="#c3c6c6" stroke={G} />)}</I>;
const AddNode = () => <I s={30} vb="0 0 30 30"><path d="M5 4v22" stroke="#8c8f8f" strokeWidth="2.500" /><Node x={5} y={4} /><Node x={5} y={26} /><Plus x={15} y={15} /></I>;
const AddBranch = ({ low }: { low?: boolean }) => <I s={30} vb="0 0 30 30"><path d="M4 4v22M4 15h13v11" stroke="#8c8f8f" strokeWidth="2.500" />{low && <path d="M17 15V4" stroke="#8c8f8f" strokeWidth="2.500" />}<Node x={4} y={4} /><Node x={4} y={26} /><Node x={17} y={low ? 4 : 26} /><Plus x={low ? 16 : 16} y={low ? 16 : 1} /></I>;

/* ---------- assembly drawing ---------- */
const EDGE = "#6b6f72";
const Hole = ({ x, y }: { x: number; y: number }) => (
  <g transform={`translate(${x} ${y}) rotate(18)`}><ellipse rx="17" ry="24" fill="#fcfcfc" stroke="#44484b" strokeWidth="3" /><path d="M4 -23C-10 -12 -14 8 -7 20C-22 8 -20 -22 4 -23z" fill="#b4b7b9" stroke="#666" strokeWidth="2" /></g>
);
const Collar = ({ x, y, dx = -68, dy = -36 }: { x: number; y: number; dx?: number; dy?: number }) => (
  <g transform={`translate(${x} ${y})`} stroke={EDGE} strokeWidth="3">
    <path d={`M18 -52L${dx + 20} ${dy - 46}C${dx - 22} ${dy - 48} ${dx - 42} ${dy + 38} ${dx - 18} ${dy + 50}L-18 52Z`} fill="url(#steel)" />
    <ellipse rx="39" ry="55" transform="rotate(14)" fill="#b9bcbe" />
  </g>
);
const AssemblyModel = () => (
  <g transform="translate(310 170) scale(.333 .338)" stroke={EDGE} strokeWidth="3" strokeLinejoin="round">
    <path d="M890 50L845 29C805 22 778 62 782 100l12 18z" fill="url(#steel)" />
    <path d="M490 285L500 272L870 62C895 48 925 52 938 68L900 90L540 300z" fill="#f1f2f3" />
    <path d="M545 285L890 76C925 55 946 78 945 110C943 140 925 165 908 174L590 350z" fill="#a9acae" />
    <path d="M890 105c12-6 25 0 35 6l82 48-45 26-76-44c-10-8-8-28 4-36z" fill="url(#axle)" />
    <Hole x={710} y={229} />
    <path d="M512 270L470 245C420 238 398 290 406 328L470 372z" fill="url(#steel)" />
    <path d="M465 375C445 330 465 282 510 268C535 270 575 290 583 310L485 350L135 1262L105 1270z" fill="#d4d6d8" />
    <path d="M460 340C465 300 490 275 515 268M475 345C482 305 505 283 530 278" fill="none" />
    <path d="M485 345C495 300 520 280 548 280C575 282 586 308 583 335C580 360 570 380 560 402L232 1238L135 1265z" fill="#a9acae" />
    <path d="M530 332c12-8 25 0 32 4l62 32-20 38-76-36c-12-8-8-28 2-38z" fill="url(#axle)" />
    <Hole x={443} y={588} /><Hole x={348} y={830} /><Hole x={252} y={1071} />
    <path d="M622 356L1025 146C1055 130 1090 145 1094 165L1040 195L680 390z" fill="#f3f4f4" />
    <path d="M655 375L1005 190C1020 172 1035 165 1055 162L1045 272L765 424z" fill="#a9acae" />
    <Hole x={860} y={316} />
    <path d="M125 1228L100 1217C55 1215 38 1265 43 1310L110 1350z" fill="url(#steel)" />
    <path d="M110 1275L95 1310L100 1345L112 1358z" fill="#d6d8d9" />
    <path d="M110 1275L207 1220L300 1272L207 1326z" fill="#f0f1f2" />
    <path d="M110 1275L207 1326V1542L110 1490z" fill="#6f7375" />
    <path d="M207 1326L300 1272V1490L207 1542z" fill="#a9acae" />
    <path d="M590 408C590 370 625 345 665 350L690 390L605 420L235 1400L225 1420C205 1410 200 1375 212 1355z" fill="#d4d6d8" />
    <path d="M605 405L664 488L325 1342L235 1400C215 1390 222 1365 235 1350z" fill="#a9acae" />
    <path d="M603 405C608 380 625 360 652 358C680 365 700 380 700 400L690 488L640 482C612 475 600 450 603 405z" fill="#e1e3e4" />
    <path d="M625 478C605 430 625 370 665 362" fill="none" />
    <Hole x={557} y={655} /><Hole x={462} y={895} /><Hole x={367} y={1136} />
    <Collar x={1105} y={238} dx={-60} dy={-30} />
    <ellipse cx="1105" cy="241" rx="18" ry="24" transform="rotate(14 1105 241)" fill="#9a928c" />
    <Collar x={727} y={455} />
    <ellipse cx="727" cy="456" rx="18" ry="24" transform="rotate(14 727 456)" fill="#9a928c" />
    <path d="M208 1370L235 1380C222 1400 230 1425 245 1434L222 1422C205 1412 203 1390 208 1370z" fill="#cfd1d2" />
    <Collar x={330} y={1405} />
    <path d="M320 1388C330 1382 350 1390 362 1398L345 1442L318 1428C308 1418 310 1395 320 1388z" fill="#c9bfb8" />
    <ellipse cx="349" cy="1419" rx="15" ry="22" transform="rotate(14 349 1419)" fill="#8f8882" />
  </g>
);
const Triad = () => (
  <g fontFamily="Liberation Sans, sans-serif" fontSize="10">
    <path d="M261 742V726" stroke="#156b1c" strokeWidth="4" /><path d="M256 728l5-11 5 11z" fill="#0d5a14" />
    <path d="M261 741l14 7" stroke="#c01818" strokeWidth="4" /><path d="M271 751l11 2-7-9z" fill="#b31313" />
    <path d="M261 741l-12 7" stroke="#1c1cc0" strokeWidth="4" /><path d="M241 753l11 0-6-8z" fill="#1515a8" />
    <text x="260" y="713" fill="#2f9a36">Y</text><text x="285" y="756" fill="#e03030">X</text><text x="235" y="756" fill="#3030e0">Z</text>
  </g>
);

/* ---------- data ---------- */
const ribbon: { w: number; t: string; icon: React.ReactNode; dim?: boolean; on?: boolean; sep?: boolean; more?: boolean }[] = [
  { w: 62, t: "Edit\nComponent", icon: <EditPart />, dim: true },
  { w: 65, t: "Insert\nComponents", icon: <Insert />, more: true },
  { w: 30, t: "Mate", icon: <Clip /> },
  { w: 61, t: "Component\nPreview\nWindow", icon: <PreviewWin />, dim: true },
  { w: 62, t: "Linear\nComponent\nPattern", icon: <Pattern />, more: true },
  { w: 50, t: "Smart\nFasteners", icon: <Smart /> },
  { w: 62, t: "Move\nComponent", icon: <Move />, more: true, sep: true },
  { w: 67, t: "Show\nHidden\nComponents", icon: <ShowHidden />, sep: true },
  { w: 51, t: "Assembly\nFeatures", icon: <AsmFeat />, more: true },
  { w: 53, t: "Reference\nGeometry", icon: <RefGeo />, more: true, sep: true },
  { w: 41, t: "New\nMotion\nStudy", icon: <Motion />, sep: true },
  { w: 50, t: "Bill of\nMaterials", icon: <Bom />, sep: true },
  { w: 50, t: "Exploded\nView", icon: <Explode />, more: true, sep: true },
  { w: 50, t: "Instant3D", icon: <Instant />, on: true },
  { w: 78, t: "Update\nSpeedPak\nSubassemblies", icon: <SpeedPak />, sep: true },
  { w: 50, t: "Take\nSnapshot", icon: <Camera /> },
  { w: 50, t: "Large\nAssembly\nSettings", icon: <AsmIcon /> },
];
const quick = [
  { n: "New", icon: <Doc /> }, { n: "Open", icon: <OpenIcon /> }, { n: "Save", icon: <Save /> },
  { n: "Print", icon: <Print /> }, { n: "Undo", icon: <Undo />, dim: true }, { n: "Redo", icon: <Undo flip />, dim: true },
];
const Part = () => <I s={15}><Block x={-1} y={-2} k={1.1} /></I>;
const partRows = ["(f) Clevis<1> (Default) <<Defa", "(-) Axle<1> (Default) <<Defau", "5 Hole Link<1> (Default) <<De", "(-) Axle<2> (Default) <<Defau", "3 Hole Link<1> (Default) <<De", "(-) Axle<3> (Default) <<Defau", "(-) Collar<1> (Default) <<Defa", "(-) Collar<2> (Default) <<Defa", "(-) Collar<3> (Default) <<Defa"];
const tree: { t: string; open?: boolean; icon: React.ReactNode }[] = [
  { t: "History", open: true, icon: <Folder kind="H" /> },
  { t: "Sensors", icon: <Folder kind="S" /> },
  { t: "Annotations", open: true, icon: <Folder kind="A" /> },
  { t: "Front Plane", icon: <PlaneIcon /> },
  { t: "Top Plane", icon: <PlaneIcon /> },
  { t: "Right Plane", icon: <PlaneIcon /> },
  { t: "Origin", icon: <OriginIcon /> },
  ...partRows.map((t) => ({ t, open: true, icon: <><Part /><Pad /><Cap /><Pad /></> })),
  { t: "Mates", open: true, icon: <MatesIcon /> },
  { t: "MirrorComponent1", open: true, icon: <MirrorIcon /> },
  { t: "Coordinate System1", icon: <CoordIcon /> },
];
const rows: [string, string][] = [
  ["Assembly Modelin…", "Assembly Mode"],
  ["Clevis<1>", "Clevis.SLDPRT"], ["Axle<1>", "Axle.SLDPRT"], ["5 Hole Link<1>", "5 Hole Link.SLD"],
  ["Axle<2>", "Axle.SLDPRT"], ["3 Hole Link<1>", "3 Hole Link.SLD"], ["Axle<3>", "Axle.SLDPRT"],
  ["Collar<1>", "Collar.SLDPRT"], ["Collar<2>", "Collar.SLDPRT"], ["Collar<3>", "Collar.SLDPRT"],
  ["5 Hole Link<2>", "5 Hole Link.SLD"], ["3 Hole Link<2>", "3 Hole Link.SLD"],
  ["Collar<4>", "Collar.SLDPRT"], ["Collar<5>", "Collar.SLDPRT"], ["Collar<6>", "Collar.SLDPRT"],
];
const actions: { n: string; w: number; icon: React.ReactNode; on?: boolean; more?: boolean }[] = [
  { n: "Save", w: 65, icon: <SaveStack />, on: true, more: true },
  { n: "Reload", w: 42, icon: <DbRefresh /> },
  { n: "Explore", w: 50, icon: <Explore />, more: true },
  { n: "Synchronize", w: 46, icon: <Sync /> },
  { n: "Structure", w: 38, icon: <Struct /> },
  { n: "Add", w: 44, icon: <AddNode /> },
  { n: "Insert above", w: 42, icon: <AddBranch /> },
  { n: "Insert below", w: 40, icon: <AddBranch low /> },
];

export default function App() {
  return (
    <>
      <Global />
      <Page>
        <Frame>
          <TitleBar>
            <Brand>
              <I s={18} w={16} vb="0 0 16 18">
                <path d="M4 1.500l7 .5-5 3.500c3 0 3 2 1 3M1 9.500c6-1.500 7 .5 5 3.500-1 2-3 3-5 3l2.500-5M15.500 9c-4-1-6 .5-4 3s0 4.500-4 4" stroke="#d9363c" strokeWidth="1.400" />
              </I>
              <BrandName><b>SOLID</b>WORKS</BrandName>
              <MenuBar>
                {["File", "Edit", "View", "Insert", "Tools", "Window"].map((m) => <MenuLink key={m} href="#">{m}</MenuLink>)}
                <I s={12}><path d="M14 2l8 8-4 1-5 5-1 5-4-5-6 6 5-7-5-4 6-1 5-4z" fill="#777" /></I>
              </MenuBar>
            </Brand>
            <QuickTools>
              <QuickGroup $w={34} as="button" aria-label="Home"><House /></QuickGroup>
              {quick.map((q) => (
                <QuickGroup key={q.n} $dim={q.dim}>
                  <button aria-label={q.n}>{q.icon}</button>
                  <Caret />
                </QuickGroup>
              ))}
              <SelectButton aria-label="Select"><Pointer /></SelectButton>
              <SelectMore aria-label="Select options"><Caret /></SelectMore>
              <QuickGroup $w={35} as="button" aria-label="Rebuild"><Traffic /></QuickGroup>
              <QuickGroup $w={36} as="button" aria-label="File properties"><ListIcon /></QuickGroup>
              <QuickGroup><button aria-label="Options"><Gear /></button><Caret /></QuickGroup>
            </QuickTools>
            <DocumentName>
              <I s={12} w={16} vb="0 0 16 12"><path d="M4 11a3.500 3.500 0 0 1 0-6 4 4 0 0 1 7-2 3.500 3.500 0 0 1 1 8z" fill="#444" /></I>
              Assembly Modeling 8-1.SLDASM[Not Locked]
            </DocumentName>
            <CommandSearch>
              <I s={16}><path d="M1 1h22v22H1z" fill="#2b2b2b" /><path d="M5 5l7 6-7 6M13 18h6" stroke="#fff" strokeWidth="2.500" /></I>
              <input placeholder="Search Commands" aria-label="Search Commands" />
              <I s={13}><circle cx="10" cy="10" r="8" stroke="#666" strokeWidth="1.800" /><path d="M16 16l6 6" stroke="#666" strokeWidth="2" /></I>
              <Caret color="#777" />
            </CommandSearch>
            <WindowButtons>
              <button aria-label="Account"><I><circle cx="12" cy="12" r="9.500" fill="#fff" stroke="#444" strokeWidth="1.200" /><path d="M12 5a4 4 0 0 1 2.500 7.500c0 2 1 2 3.500 3a8 8 0 0 1-12 0c2.500-1 3.500-1 3.500-3A4 4 0 0 1 12 5z" fill="#444" /></I></button>
              <button aria-label="Help"><I><circle cx="12" cy="12" r="9.500" fill="#fff" stroke="#444" strokeWidth="1.200" /><path d="M9 9.500c0-4 6-4 6-.5 0 2.500-3 2.500-3 5M12 17v.3" stroke="#444" strokeWidth="1.800" /></I></button>
              <button aria-label="Minimize"><I><path d="M6 18h12" stroke="#444" strokeWidth="2.500" strokeLinecap="butt" /></I></button>
              <button aria-label="Restore"><I><path d="M8 9V5h13v9h-5" stroke="#555" strokeWidth="1.200" /><path d="M3 9h13v10H3z" fill="#fff" stroke="#555" strokeWidth="1.200" /></I></button>
              <button aria-label="Close"><I><path d="M6 6l12 12M18 6L6 18" stroke="#333" strokeWidth="1.400" /></I></button>
            </WindowButtons>
          </TitleBar>

          <Ribbon>
            {ribbon.map((b) => (
              <RibbonButton key={b.t} $w={b.w} $dim={b.dim} $on={b.on} $sep={b.sep} disabled={b.dim}>
                {b.icon}
                <RibbonText>{b.t}</RibbonText>
                {b.more && <Caret />}
              </RibbonButton>
            ))}
            <Collapse aria-label="Collapse ribbon"><Chevron s={12} d="M2 11l6-6 6 6" /></Collapse>
          </Ribbon>

          <Body>
            <Workspace>
              <TabRow>
                <CommandTab $on $w={65}>Assembly</CommandTab>
                <CommandTab $w={46}>Layout</CommandTab>
                <CommandTab $w={43}>Sketch</CommandTab>
                <CommandTab $w={51}>Markup</CommandTab>
                <CommandTab $w={55}>Evaluate</CommandTab>
                <CommandTab $w={134}>SOLIDWORKS Add-Ins</CommandTab>
                <ViewTools>
                  <button aria-label="Zoom to fit"><ZoomFit /></button>
                  <button aria-label="Zoom to area"><ZoomFit area /></button>
                  <button aria-label="Previous view"><PrevView /></button>
                  <button aria-label="Section view"><SectionView /></button>
                </ViewTools>
              </TabRow>
              <Split>
                <Manager>
                  <Grip><I s={6}><circle cx="12" cy="12" r="11" fill="#ccc" /></I></Grip>
                  <ManagerTabs>
                    <ManagerTab $on aria-label="Feature tree"><AsmIcon s={22} /></ManagerTab>
                    <ManagerTab aria-label="Properties"><ListIcon /></ManagerTab>
                    <ManagerTab aria-label="Configurations"><Config /></ManagerTab>
                    <ManagerTab aria-label="Dimensions"><Target /></ManagerTab>
                    <ManagerTab aria-label="Display"><Ball dark s={22} /></ManagerTab>
                    <MoreTabs aria-label="More"><Chevron s={12} /></MoreTabs>
                  </ManagerTabs>
                  <FilterRow><Funnel /><Caret /></FilterRow>
                  <Tree>
                    <TreeItem $root><AsmIcon s={15} /><Pad /><Cap /><Pad />Assembly Modeling 8-1 (Default)</TreeItem>
                    {tree.map((r) => (
                      <TreeItem key={r.t}>
                        <Arrow>{r.open && <I s={6} vb="0 0 6 6"><path d="M1.500 .5L5 3 1.500 5.500z" fill="#555" /></I>}</Arrow>
                        {r.icon}<Pad />{r.t}
                      </TreeItem>
                    ))}
                  </Tree>
                  <TreeScroll><Chevron s={11} d="M10 2L4 8l6 6" /><TreeThumb /><Chevron s={11} /></TreeScroll>
                  <Nub aria-label="Collapse panel"><I s={5}><circle cx="12" cy="12" r="11" fill="#ccc" /></I></Nub>
                </Manager>
                <Viewport>
                  <ModelCanvas viewBox="222 153 551 634" preserveAspectRatio="xMinYMin meet" role="img" aria-label="Linkage assembly">
                    <defs>
                      <linearGradient id="steel" x1=".7" y1="0" x2=".4" y2="1"><stop offset="0" stopColor="#e4e6e7" /><stop offset=".35" stopColor="#fafafa" /><stop offset="1" stopColor="#9da0a3" /></linearGradient>
                      <linearGradient id="axle" x1=".7" y1="0" x2=".3" y2="1"><stop offset="0" stopColor="#a59a92" /><stop offset=".4" stopColor="#e2dad4" /><stop offset="1" stopColor="#8f857e" /></linearGradient>
                    </defs>
                    <AssemblyModel />
                    <Triad />
                  </ModelCanvas>
                  <TaskTabs>
                    <TaskTab aria-label="Home"><House /></TaskTab>
                    <TaskTab aria-label="Design library"><Library /></TaskTab>
                    <TaskTab aria-label="File explorer"><FolderOpen /></TaskTab>
                    <TaskTab aria-label="View palette"><Palette /></TaskTab>
                    <TaskTab aria-label="Appearances"><Ball /></TaskTab>
                    <TaskTab aria-label="Custom properties"><ListIcon /></TaskTab>
                    <TaskTab aria-label="Component properties"><Props /></TaskTab>
                    <TaskTab $on aria-label="3DEXPERIENCE"><Compass s={24} /></TaskTab>
                  </TaskTabs>
                  <ViewName>*Isometric</ViewName>
                </Viewport>
              </Split>
              <BottomBar>
                <SheetNav><NavCells><span /><span /><span /><span /></NavCells><NavBox /></SheetNav>
                <SheetTab $on $w={50}>Model</SheetTab>
                <SheetTab $w={108}>Motion Study 1</SheetTab>
              </BottomBar>
            </Workspace>

            <Pane>
              <PaneHead>
                <Chevron s={11} d="M7 3L2 8l5 5M14 3L9 8l5 5" c="#222" />
                <h2>3DEXPERIENCE</h2>
                <PaneTools>
                  <Gear s={15} stroke="#eee" fill="#888" />
                  <I s={13}><path d="M1 12h8M9 6v12M22 6v12" stroke="#111" strokeWidth="3" /><path d="M9 8l13 1v6l-13 1z" fill="#111" /></I>
                </PaneTools>
              </PaneHead>
              <PaneBody>
                <SessionBar>
                  <Compass />
                  <SessionTitle><b>ENOVIA</b>MySession - Quick Start xDesign (...<Chevron s={16} d="M2 5l6 6 6-6" c="#fff" sw={2.5} /></SessionTitle>
                  <SessionSearch>
                    <input placeholder="Search" aria-label="Search" />
                    <I s={20}><circle cx="10" cy="10" r="8" stroke="#666" strokeWidth="1.800" /><path d="M16 16l6 6" stroke="#666" strokeWidth="2.500" /></I>
                    <Chevron s={13} d="M2 5l6 6 6-6" c="#777" />
                  </SessionSearch>
                  <button aria-label="Tags"><I><path d="M3 4l7-1 11 12-6 6L3 10z" stroke="#fff" strokeWidth="1.800" /><circle cx="7" cy="7" r="1.500" fill="#fff" /></I></button>
                  <I s={20} w={42} vb="-20 0 42 20"><path d="M4 2.500h17M4 10h17M4 17.500h17" stroke="#fff" strokeWidth="3" strokeLinecap="butt" /></I>
                </SessionBar>
                <Grid>
                  <thead>
                    <tr>
                      <Th $w={199}>Component Name</Th><Th $w={60}>Status</Th><Th $w={40} aria-label="Lock" /><Th $w={40}>Rev</Th>
                      <Th $w={34}>Is...</Th><Th $w={100}>Maturity State</Th><Th $w={138}>Description</Th><Th>File Name</Th>
                    </tr>
                  </thead>
                  <tbody>
                    {rows.map(([n, f], i) => (
                      <tr key={n}>
                        <Td $pad={0}>
                          <NameCell $child={i > 0}>
                            {i === 0 ? <><Toggle>-</Toggle><BlueAsm /></> : <><Guide $last={i === rows.length - 1} /><BluePart /></>}
                            {n}
                          </NameCell>
                        </Td>
                        <Td $pad={20}><StatusIcon /></Td>
                        <Td $pad={11}><Unlock /></Td>
                        <Td $pad={9}>A.1</Td>
                        <Td $pad={4}><Check /></Td>
                        <Td>In Work</Td>
                        <Td />
                        <Td>{f}</Td>
                      </tr>
                    ))}
                  </tbody>
                </Grid>
                <PaneScroll>
                  <I s={8} vb="0 0 8 8"><path d="M6 0v8L2 4z" fill="#999" /></I>
                  <PaneThumb />
                  <I s={8} vb="0 0 8 8"><path d="M2 0v8l4-4z" fill="#444" /></I>
                </PaneScroll>
              </PaneBody>
              <PaneFoot />
              <Helmet aria-label="Assistant">
                <I s={30} vb="0 0 30 30"><path d="M3 21C2 13 5 8 12 8s11 3 12 11l5 3H10c-3 2-6 2-7-1z" fill="#dedede" stroke="#555" strokeWidth="1.500" /><path d="M4 20c6-2 14-2 20-1" stroke="#555" strokeWidth="1.200" /><path d="M8 14h.3M12 14h.3M16 14h.3" stroke="#666" strokeWidth="2" /></I>
              </Helmet>
              <Actions>
                <ActionTabsRow>
                  <ActionTabs>
                    <ActionTab $on $w={67}>Lifecycle</ActionTab>
                    <ActionTab $w={89}>Collaboration</ActionTab>
                    <ActionTab $w={76}>Simulation</ActionTab>
                    <ActionTab $w={63}>View</ActionTab>
                    <ActionTab $w={65}>Tools</ActionTab>
                  </ActionTabs>
                  <I s={20} vb="0 0 20 20"><path d="M2 5.500l4-3 4 3 4-3 4 3v3L10 16 2 8.500z" fill="#fff" stroke="#aaa" strokeWidth="1.800" /></I>
                </ActionTabsRow>
                <ActionBar>
                  {actions.map((a) => (
                    <Action key={a.n} $w={a.w} $on={a.on} $more={a.more} aria-label={a.n}>{a.icon}{a.more && <Caret color="#111" />}</Action>
                  ))}
                </ActionBar>
              </Actions>
            </Pane>
          </Body>

          <Overlay $x={740} $y={496} width="100" height="110" viewBox="748 503 100 110">
            <g fill="#f9423f" stroke="#f9423f" strokeLinejoin="round">
              <path d="M757 522l27-13v26z" /><path d="M780 522h29" strokeWidth="9" strokeLinecap="round" />
              <path d="M815 549l20 22-26 8z" /><path d="M822 570l8 30" strokeWidth="9" strokeLinecap="round" />
            </g>
          </Overlay>
          <Overlay $x={26} $y={138} width="40" height="44" viewBox="34 145 40 44">
            <path d="M46 148v22M36 158h20" stroke="#000" strokeWidth="1.500" />
            <path d="M42 151l4-5 4 5zM39 154l-5 4 5 4zM53 154l5 4-5 4zM42 165l4 5 4-5z" fill="#000" />
            <path d="M46 158v22l5-4 4 9 4-2-4-8h7z" fill="#fff" stroke="#222" strokeWidth="1" />
          </Overlay>
        </Frame>
      </Page>
    </>
  );
}
